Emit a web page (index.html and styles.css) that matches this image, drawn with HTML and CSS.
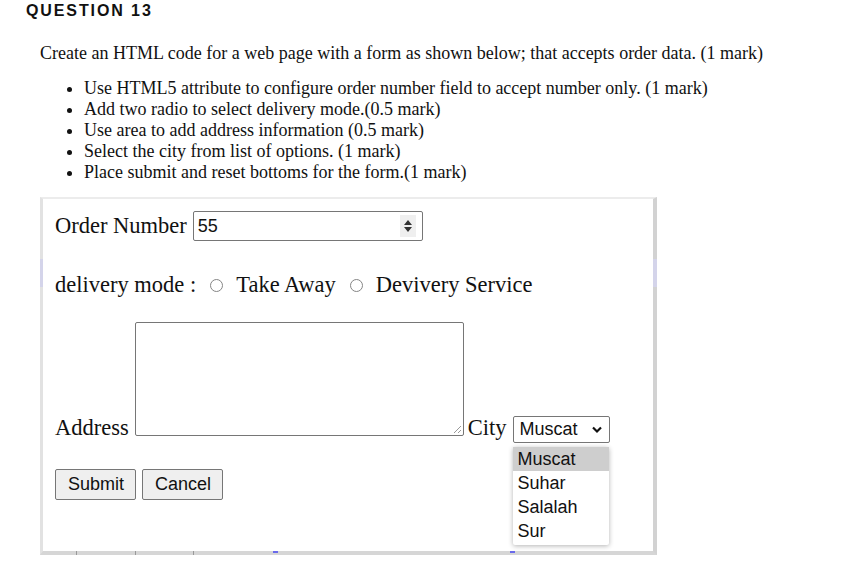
FILE: index.html
```html
<!DOCTYPE html>
<html lang="en">
<head>
    <meta charset="UTF-8">
    <meta name="viewport" content="width=device-width, initial-scale=1.0">
    <title>Question 13</title>
    <link rel="stylesheet" href="styles.css">
</head>
<body>
    <h2 class="q-title">QUESTION 13</h2>
    <p class="q-text">Create an HTML code for a web page with a form as shown below; that accepts order data. (1 mark)</p>
    <ul class="q-list">
        <li>Use HTML5 attribute to configure order number field to accept number only. (1 mark)</li>
        <li>Add two radio to select delivery mode.(0.5 mark)</li>
        <li>Use area to add address information (0.5 mark)</li>
        <li>Select the city from list of options. (1 mark)</li>
        <li>Place submit and reset bottoms for the form.(1 mark)</li>
    </ul>

    <div class="shot">
        <form class="order-form">
            <div class="row row-order">
                <label>Order Number</label>
                <div class="num-box">
                    <span class="num-val">55</span>
                    <svg class="spin" width="12" height="16" viewBox="0 0 12 16"><path d="M6 2 L10 7 L2 7 Z M6 14 L10 9 L2 9 Z" fill="#333"/></svg>
                </div>
            </div>
            <div class="row row-mode">
                <span>delivery mode :</span>
                <span class="radio"></span>
                <span>Take Away</span>
                <span class="radio"></span>
                <span>Devivery Service</span>
            </div>
            <div class="row row-addr">
                <label>Address</label>
                <div class="area">
                    <svg class="grip" width="10" height="10" viewBox="0 0 10 10"><path d="M9 2 L2 9 M9 6 L6 9" stroke="#999" stroke-width="1"/></svg>
                </div>
                <label class="city-label">City</label>
                <div class="select-wrap">
                    <div class="select-box">
                        <span>Muscat</span>
                        <svg width="12" height="8" viewBox="0 0 12 8"><path d="M2 1.5 L6 5.5 L10 1.5" stroke="#111" stroke-width="2.2" fill="none"/></svg>
                    </div>
                    <ul class="options">
                        <li class="sel">Muscat</li>
                        <li>Suhar</li>
                        <li>Salalah</li>
                        <li>Sur</li>
                    </ul>
                </div>
            </div>
            <div class="row row-btns">
                <button type="button">Submit</button>
                <button type="button">Cancel</button>
            </div>
        </form>
        <span class="tint tint-l"></span>
        <span class="tint tint-r"></span>
        <span class="mark mark-1"></span>
        <span class="mark mark-2"></span>
        <span class="tick tick-1"></span>
        <span class="tick tick-2"></span>
        <span class="tick tick-3"></span>
    </div>
</body>
</html>
```

FILE: styles.css
```css
body {
    margin: 0;
    background: #fff;
    color: #111;
    font-family: "Liberation Serif", "Times New Roman", serif;
}
.q-title {
    margin: 0;
    padding: 2px 0 0 26px;
    font-family: "Liberation Sans", Arial, sans-serif;
    font-size: 16px;
    font-weight: bold;
    letter-spacing: 1.9px;
    line-height: 18px;
}
.q-text {
    margin: 23px 0 0 40px;
    font-size: 18px;
    line-height: 20px;
}
.q-list {
    margin: 15px 0 0 0;
    padding-left: 84px;
    font-size: 18px;
    line-height: 21px;
}

/* framed browser capture */
.shot {
    position: relative;
    margin: 14px 0 0 40px;
    width: 610px;
    height: 352px;
    border-left: 3px solid #e2e2e2;
    border-top: 2px solid #ececec;
    border-right: 4px solid #d2d2d2;
    border-bottom: 4px solid #d6d6d6;
}
.order-form {
    padding: 12px 0 0 12px;
    font-size: 22.5px;
}
.row {
    display: flex;
    align-items: center;
}
.row-order {
    height: 30px;
    gap: 6px;
}
.num-box {
    box-sizing: border-box;
    width: 230px;
    height: 30px;
    border: 1px solid #767676;
    border-radius: 2px;
    display: flex;
    align-items: center;
    justify-content: space-between;
    padding: 0 6px 0 4px;
    font-family: "Liberation Sans", Arial, sans-serif;
    font-size: 18px;
}
.spin {
    background: #efefef;
    padding: 3px 2px;
}
.row-mode {
    margin-top: 29px;
    height: 30px;
}
.row-mode .radio {
    box-sizing: border-box;
    width: 13px;
    height: 13px;
    border: 1px solid #858585;
    border-radius: 50%;
    margin: 0 13px 0 14px;
}
.row-mode .radio:nth-child(4) {
    margin-left: 14px;
}
.row-addr {
    margin-top: 22px;
    align-items: flex-end;
}
.row-addr label {
    line-height: 22px;
    margin-bottom: -3px;
}
.area {
    position: relative;
    box-sizing: border-box;
    width: 329px;
    height: 114px;
    border: 1px solid #767676;
    border-radius: 2px;
    margin-left: 6px;
}
.grip {
    position: absolute;
    right: 1px;
    bottom: 1px;
}
.city-label {
    margin-left: 4px;
}
.select-wrap {
    position: relative;
    margin-left: 6px;
    margin-bottom: -7px;
}
.select-box {
    box-sizing: border-box;
    width: 97px;
    height: 27px;
    border: 1px solid #767676;
    border-radius: 2px;
    display: flex;
    align-items: center;
    justify-content: space-between;
    padding: 0 6px 0 6px;
    font-family: "Liberation Sans", Arial, sans-serif;
    font-size: 18px;
}
.options {
    position: absolute;
    top: 31px;
    left: 0;
    width: 96px;
    margin: 0;
    padding: 0 0 2px 0;
    list-style: none;
    background: #fff;
    border-radius: 2px;
    box-shadow: 0 1px 5px rgba(0, 0, 0, 0.3);
    font-family: "Liberation Sans", Arial, sans-serif;
    font-size: 18px;
    line-height: 24px;
    z-index: 2;
}
.options li {
    padding-left: 5px;
}
.options li.sel {
    background: #cecece;
}
.row-btns {
    margin-top: 33px;
    gap: 6px;
}
.row-btns button {
    box-sizing: border-box;
    height: 31px;
    padding: 0 11px 0 12px;
    background: #efefef;
    border: 1px solid #767676;
    border-radius: 2px;
    color: #111;
    font-family: "Liberation Sans", Arial, sans-serif;
    font-size: 18px;
}

/* stray capture artefacts */
.tint {
    position: absolute;
    top: 60px;
    width: 3px;
    height: 28px;
    background: #d4d4ea;
}
.tint-l { left: -3px; }
.tint-r { right: -4px; width: 4px; }
.mark {
    position: absolute;
    width: 5px;
    height: 2px;
    background: #6a6aea;
    bottom: -2px;
}
.mark-1 { left: 230px; }
.mark-2 { left: 467px; }
.tick {
    position: absolute;
    bottom: -4px;
    width: 1px;
    height: 4px;
    background: #999;
}
.tick-1 { left: 33px; }
.tick-2 { left: 92px; }
.tick-3 { left: 150px; }
```
